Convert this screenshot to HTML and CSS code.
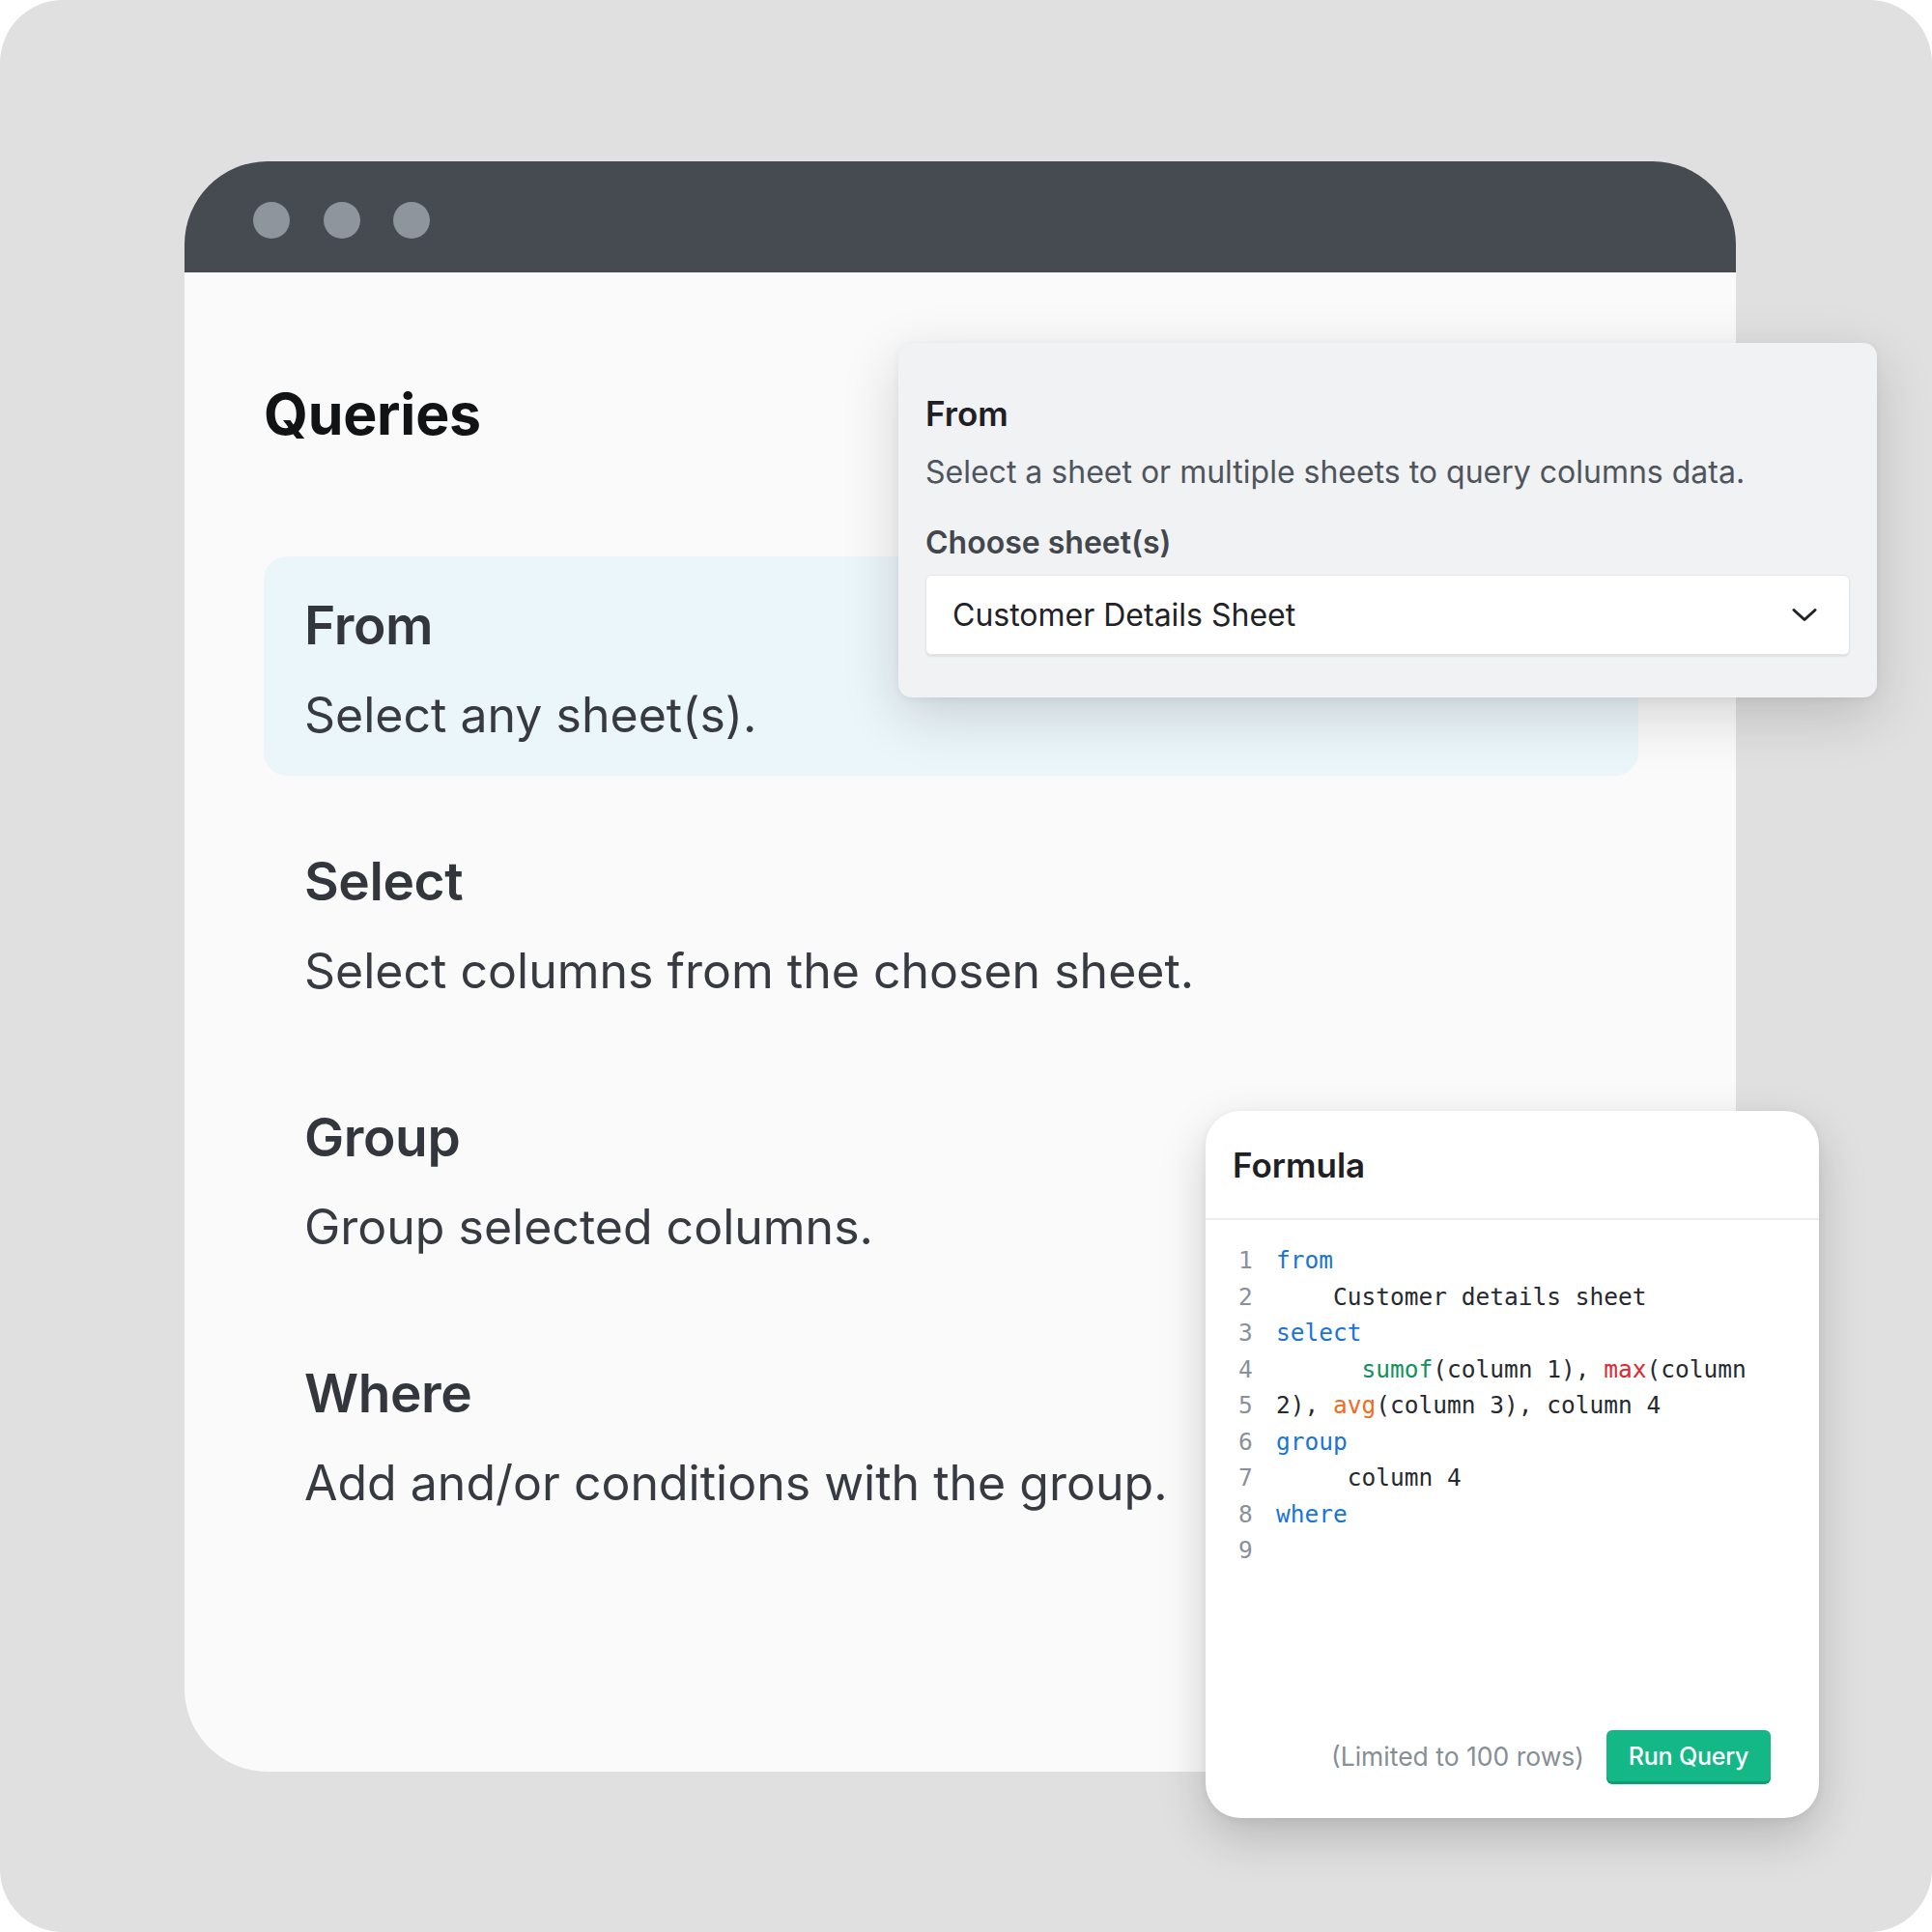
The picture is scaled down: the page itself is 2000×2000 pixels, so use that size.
FILE: index.html
```html
<!DOCTYPE html>
<html lang="en">
<head>
<meta charset="utf-8">
<title>Queries</title>
<link rel="stylesheet" href="styles.css">
</head>
<body>
<div class="canvas">
  <div class="window">
    <div class="titlebar">
      <span class="dot"></span><span class="dot"></span><span class="dot"></span>
    </div>
    <div class="content">
      <h1 class="page-title">Queries</h1>
      <div class="sections">
        <div class="section active">
          <h2 class="section-title">From</h2>
          <p class="section-desc">Select any sheet(s).</p>
        </div>
        <div class="section">
          <h2 class="section-title">Select</h2>
          <p class="section-desc">Select columns from the chosen sheet.</p>
        </div>
        <div class="section">
          <h2 class="section-title">Group</h2>
          <p class="section-desc">Group selected columns.</p>
        </div>
        <div class="section">
          <h2 class="section-title">Where</h2>
          <p class="section-desc">Add and/or conditions with the group.</p>
        </div>
      </div>
    </div>
  </div>

  <div class="popover">
    <div class="pop-title">From</div>
    <div class="pop-desc">Select a sheet or multiple sheets to query columns data.</div>
    <div class="pop-label">Choose sheet(s)</div>
    <div class="select">
      <span class="select-value">Customer Details Sheet</span>
      <svg class="chevron" width="26" height="15" viewBox="0 0 26 15"><path d="M2 2.5 L13 12.5 L24 2.5" fill="none" stroke="#1f2226" stroke-width="3" stroke-linecap="round" stroke-linejoin="round"/></svg>
    </div>
  </div>

  <div class="formula">
    <div class="formula-head">Formula</div>
    <div class="code">
      <div class="line"><span class="ln">1</span><span class="src"><span class="kw">from</span></span></div>
      <div class="line"><span class="ln">2</span><span class="src">    Customer details sheet</span></div>
      <div class="line"><span class="ln">3</span><span class="src"><span class="kw">select</span></span></div>
      <div class="line"><span class="ln">4</span><span class="src">      <span class="fn-green">sumof</span>(column 1), <span class="fn-red">max</span>(column</span></div>
      <div class="line"><span class="ln">5</span><span class="src">2), <span class="fn-orange">avg</span>(column 3), column 4</span></div>
      <div class="line"><span class="ln">6</span><span class="src"><span class="kw">group</span></span></div>
      <div class="line"><span class="ln">7</span><span class="src">     column 4</span></div>
      <div class="line"><span class="ln">8</span><span class="src"><span class="kw">where</span></span></div>
      <div class="line"><span class="ln">9</span><span class="src"></span></div>
    </div>
    <div class="formula-foot">
      <span class="limit">(Limited to 100 rows)</span>
      <button class="run-btn">Run Query</button>
    </div>
  </div>
</div>
</body>
</html>
```
FILE: styles.css
```css
* { box-sizing: border-box; }

html, body {
  margin: 0;
  padding: 0;
  background: #ffffff;
}

body {
  font-family: "Inter", "Noto Sans", sans-serif;
}

.canvas {
  position: relative;
  width: 2000px;
  height: 2000px;
  background: #e0e0e0;
  border-radius: 65px;
  padding: 167px 0 0 191px;
  overflow: hidden;
}

.window {
  width: 1606px;
  height: 1667px;
  border-radius: 86px;
  overflow: hidden;
  background: #fafafa;
}

.titlebar {
  height: 115px;
  background: #464a51;
  display: flex;
  align-items: flex-start;
  gap: 34.5px;
  padding: 42px 0 0 71px;
}

.dot {
  width: 38px;
  height: 38px;
  border-radius: 50%;
  background: #8f959d;
}

.content {
  padding: 111px 101px 0 82px;
}

.page-title {
  margin: 0 0 112px 0;
  font-size: 59px;
  line-height: 71px;
  font-weight: 700;
  color: #121314;
  letter-spacing: -0.2px;
}

.sections {
  display: flex;
  flex-direction: column;
  gap: 38px;
}

.section {
  padding: 37px 42px 34px 42px;
  border-radius: 24px;
}

.section.active {
  background: #ebf6fb;
}

.section-title {
  margin: 0;
  font-size: 55px;
  line-height: 68px;
  font-weight: 600;
  color: #33373d;
  letter-spacing: -0.4px;
}

.section-desc {
  margin: 30px 0 0 0;
  font-size: 50px;
  line-height: 58px;
  font-weight: 400;
  color: #373b41;
}

/* Popover */
.popover {
  position: absolute;
  left: 930px;
  top: 355px;
  width: 1013px;
  height: 367px;
  background: #f1f2f4;
  border-radius: 14px;
  padding: 52px 28px 0 28px;
  box-shadow: 0 18px 60px rgba(0, 0, 0, 0.16), 0 2px 8px rgba(0, 0, 0, 0.05);
}

.pop-title {
  font-size: 35px;
  line-height: 42px;
  font-weight: 600;
  color: #1e2024;
}

.pop-desc {
  margin-top: 22px;
  font-size: 32px;
  line-height: 36px;
  color: #4f555d;
}

.pop-label {
  margin-top: 37px;
  font-size: 32px;
  line-height: 36px;
  font-weight: 600;
  color: #42474e;
}

.select {
  margin-top: 15px;
  height: 83px;
  background: #ffffff;
  border: 1px solid #e3e5e8;
  border-radius: 6px;
  box-shadow: 0 2px 2px rgba(0, 0, 0, 0.07);
  display: flex;
  align-items: center;
  justify-content: space-between;
  padding: 0 33px 0 27px;
}

.select-value {
  font-size: 32px;
  color: #1f2226;
}

.chevron {
  display: block;
}

/* Formula card */
.formula {
  position: absolute;
  left: 1248px;
  top: 1150px;
  width: 635px;
  height: 732px;
  background: #ffffff;
  border-radius: 36px;
  box-shadow: 0 20px 50px rgba(0, 0, 0, 0.18), 0 2px 10px rgba(0, 0, 0, 0.06);
  display: flex;
  flex-direction: column;
}

.formula-head {
  padding: 35px 28px 34px 28px;
  font-size: 35px;
  line-height: 42px;
  font-weight: 600;
  color: #1e2024;
  border-bottom: 2px solid #eceef0;
}

.code {
  flex: 1;
  padding: 23px 20px 0 34px;
  font-family: "DejaVu Sans Mono", "Liberation Mono", monospace;
  font-size: 24.5px;
  line-height: 37.5px;
  color: #262a2f;
}

.line {
  display: flex;
  height: 37.5px;
}

.ln {
  width: 15px;
  margin-right: 24px;
  color: #8a9099;
  flex: none;
}

.src {
  white-space: pre;
}

.kw { color: #1a74d6; }
.fn-green { color: #12905e; }
.fn-red { color: #e0262f; }
.fn-orange { color: #f26b1d; }

.formula-foot {
  display: flex;
  align-items: center;
  justify-content: flex-end;
  gap: 23px;
  padding: 0 50px 38px 0;
}

.limit {
  font-size: 26.5px;
  color: #868e96;
}

.run-btn {
  height: 53px;
  width: 170px;
  border: none;
  border-radius: 6px;
  background: #14b886;
  box-shadow: 0 3px 0 #0e9e72;
  color: #ffffff;
  font-family: "Inter", "Noto Sans", sans-serif;
  font-size: 25px;
  font-weight: 500;
  letter-spacing: -0.2px;
  padding: 0;
}
```
